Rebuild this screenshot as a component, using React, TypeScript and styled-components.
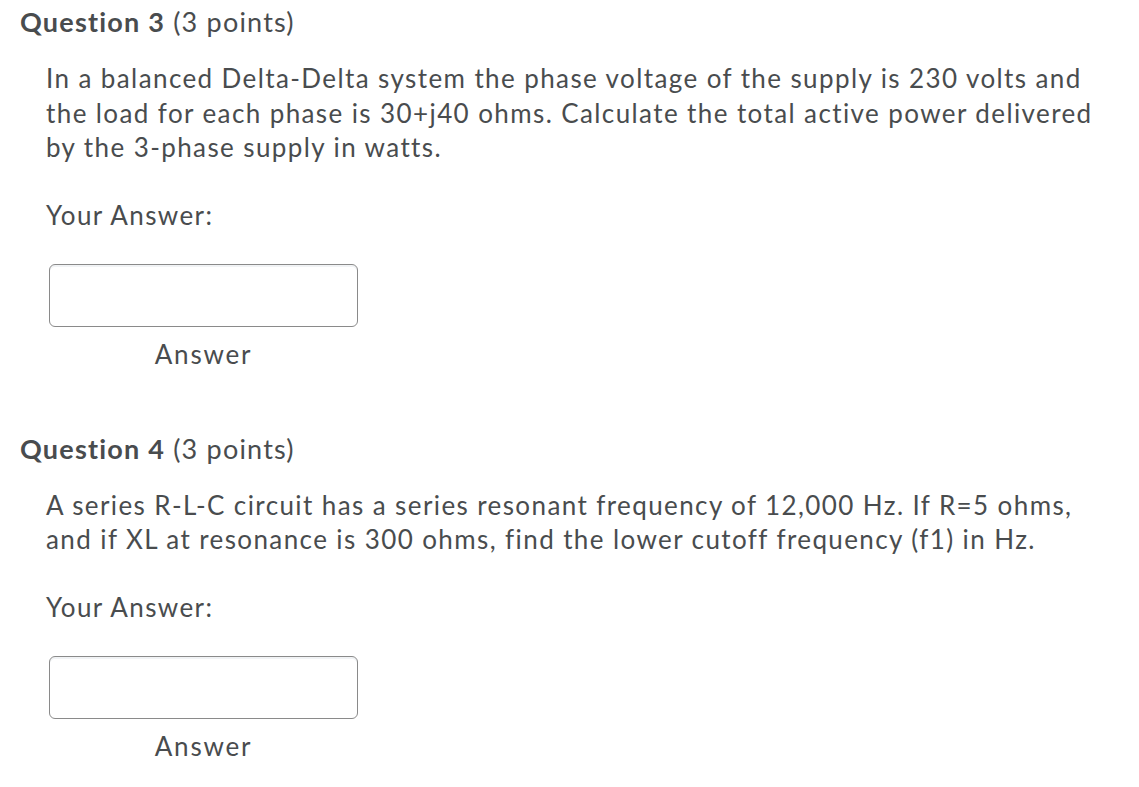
import React from 'react';
import styled, { createGlobalStyle } from 'styled-components';

const GlobalStyle = createGlobalStyle`
  body {
    margin: 0;
    background: #ffffff;
    font-family: Lato, "Open Sans", sans-serif;
    color: #494c4e;
    font-variant-ligatures: none;
  }
`;

interface QuestionProps {
  number: number;
  points: number;
  text: string;
}

const Question: React.FC<QuestionProps> = ({ number, points, text }) => (
  <QuestionBlock>
    <QuestionTitle>
      <strong>Question {number}</strong> ({points} points)
    </QuestionTitle>
    <QuestionBody>
      <QuestionText>{text}</QuestionText>
      <AnswerLabel>Your Answer:</AnswerLabel>
      <AnswerField>
        <AnswerInput type="text" aria-label="Answer" />
        <AnswerCaption>Answer</AnswerCaption>
      </AnswerField>
    </QuestionBody>
  </QuestionBlock>
);

const App: React.FC = () => (
  <>
    <GlobalStyle />
    <Page>
      <Question
        number={3}
        points={3}
        text="In a balanced Delta-Delta system the phase voltage of the supply is 230 volts and the load for each phase is 30+j40 ohms. Calculate the total active power delivered by the 3-phase supply in watts."
      />
      <Question
        number={4}
        points={3}
        text="A series R-L-C circuit has a series resonant frequency of 12,000 Hz. If R=5 ohms, and if XL at resonance is 300 ohms, find the lower cutoff frequency (f1) in Hz."
      />
    </Page>
  </>
);

const Page = styled.div`
  padding: 4px 20px 0 20px;
  width: 1100px;
`;

const QuestionBlock = styled.section`
  margin-bottom: 60px;
`;

const QuestionTitle = styled.h2`
  margin: 0;
  font-size: 27px;
  line-height: 36px;
  font-weight: 400;
  letter-spacing: 1.2px;
  color: #494c4e;

  strong {
    font-weight: 700;
  }
`;

const QuestionBody = styled.div`
  padding-left: 26px;
`;

const QuestionText = styled.p`
  margin: 21px 0 0 0;
  font-size: 26px;
  line-height: 34.5px;
  letter-spacing: 1.4px;
  width: 1070px;
`;

const AnswerLabel = styled.p`
  margin: 33px 0 0 0;
  font-size: 26px;
  line-height: 34px;
  letter-spacing: 1.4px;
`;

const AnswerField = styled.div`
  display: inline-flex;
  flex-direction: column;
  align-items: center;
  margin: 32px 0 0 3px;
`;

const AnswerInput = styled.input`
  box-sizing: border-box;
  width: 309px;
  height: 63px;
  border: 1px solid #8a8a8a;
  border-radius: 6px;
  box-shadow: inset 0 2px 0 #f1f3f5;
  background: #ffffff;
  outline: none;
`;

const AnswerCaption = styled.span`
  margin-top: 10px;
  font-size: 26px;
  line-height: 34px;
  letter-spacing: 1.8px;
`;

export default App;
